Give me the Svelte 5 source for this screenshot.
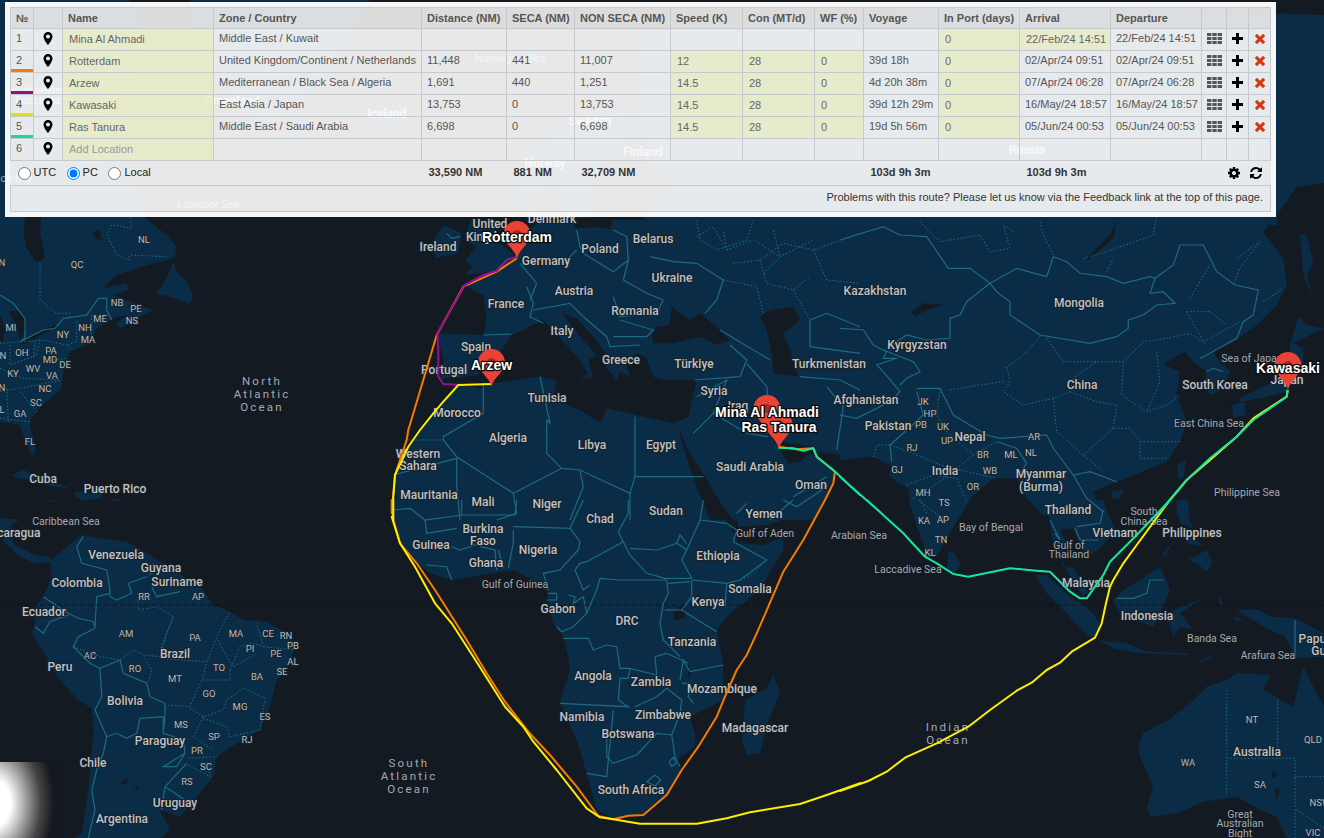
<script>
  // map shapes are traced per tile; each tile is drawn at 1/3 scale from its own origin
  const tiles = [
    { // eastern north america, caribbean
      at: [0, 215],
      land: [
        '0,0 430,5 500,60 528,95 525,130 440,150 350,180 310,220 380,205 385,225 340,240 420,270 458,285 430,300 360,342 350,325 380,300 340,310 290,340 270,385 210,410 190,470 185,520 140,560 95,600 90,630 108,710 95,725 70,660 60,630 0,620',
        '520,140 530,170 560,200 580,240 570,268 500,242 468,238 500,190',
        '35,780 70,765 130,790 210,820 160,815 100,795 50,790',
        '225,830 310,838 300,850 250,858 225,845',
        '145,855 180,858 160,860',
        '335,852 360,852 358,858 335,858'
      ],
      water: [
        '75,0 125,0 120,50 135,130 110,142 80,100 72,60',
        '25,290 60,285 80,310 75,350 60,375 45,320',
        '0,300 15,340 8,380 0,375',
        '62,382 130,345 132,355 75,387',
        '132,343 165,330 172,338 135,352',
        '280,50 300,45 305,75 285,70'
      ],
      solid: ['0,240 40,265 75,310 75,370 60,380 130,345 165,340 190,310 260,300 295,250 320,250 320,285 335,315'],
      dash: [
        '120,145 120,255 170,295 210,295',
        '335,30 320,60 350,120 385,135 390,120 500,125',
        '340,30 395,40 390,0',
        '230,320 230,380 200,390',
        '275,300 275,370',
        '0,385 130,375 200,390 215,405',
        '30,390 30,450 110,420 120,375',
        '130,440 200,430',
        '0,460 70,490 180,495',
        '0,530 60,520 185,495',
        '60,530 110,590 90,610',
        '0,610 90,620',
        '20,520 25,620',
        '105,380 100,430'
      ]
    },
    { // south america
      at: [0, 500],
      land: [
        '150,185 165,170 230,115 250,105 300,115 380,125 450,165 530,215 610,270 640,315 690,335 730,360 800,365 860,400 885,440 870,490 830,540 810,620 780,690 710,730 650,770 640,830 590,890 540,950 480,930 510,990 480,1014 225,1014 245,1000 265,870 280,700 275,625 235,600 170,530 140,470 95,400 105,370 100,330 130,290 155,230',
        '0,55 60,58 35,75 30,110 45,135 105,165 150,170 160,185 105,190 60,170 20,135 0,105'
      ],
      water: ['360,850 385,835 380,855', '400,860 415,855 418,870'],
      solid: [
        '250,110 230,140 245,190 320,210 330,270 330,290 350,300 395,280 385,250 440,230',
        '450,225 460,190',
        '455,260 470,290 540,275',
        '330,280 290,290 285,380',
        '130,290 205,340 235,355 280,365 285,385',
        '105,380 130,400 150,365 205,345',
        '285,385 235,410 220,440 270,490 300,505 360,480',
        '360,480 370,520 440,550 450,590 495,610 495,650 490,695',
        '300,505 305,590 285,630 320,710 350,700 380,715 410,700 420,655 490,650 490,700 550,720 555,760 490,800 530,800 555,760',
        '320,710 310,760 290,810 275,870 285,930 265,1014',
        '495,860 570,910',
        '495,860 485,930',
        '495,860 560,790'
      ],
      dash: [
        '415,280 415,330 470,320 520,350 480,450',
        '520,350 500,400 480,470 430,465',
        '220,440 300,470 360,480 400,450 430,465 455,510 445,545',
        '480,475 620,485 610,530 570,620 510,615 495,625',
        '620,485 655,400 690,335',
        '610,540 690,540 690,510',
        '690,510 720,440 760,430 790,440 770,370',
        '655,420 680,470 700,500 770,460',
        '790,440 885,450',
        '570,625 610,650 670,630 680,600 730,565 795,595 780,690',
        '610,650 580,710 640,750',
        '610,655 680,680 690,710 780,690',
        '565,775 650,770',
        '565,795 630,830 620,780'
      ]
    },
    { // europe, north africa, middle east
      at: [380, 220],
      land: [
        '55,900 45,765 85,690 130,620 190,545 235,495 225,470 180,480 190,420 170,340 310,345 320,300 310,225 250,195 300,175 350,155 410,110 440,60 445,35 470,10 470,0 570,0 590,25 650,22 690,28 700,0 1440,0 1440,710 1310,695 1310,710 1370,760 1350,800 1300,900',
        '270,0 340,0 350,60 400,105 380,150 255,165 275,140 255,120 290,80 255,60',
        '190,15 245,40 235,100 165,115 160,60',
        '495,330 515,335 510,375 495,370',
        '490,385 515,385 515,435 490,435',
        '545,445 610,450 600,485 560,470',
        '705,505 770,505 770,515 705,515',
        '895,510 930,505 905,525'
      ],
      water: [
        '245,495 225,475 290,465 340,430 395,345 440,325 490,300 545,360 600,420 625,460 600,480 640,470 625,420 650,405 600,350 546,280 590,295 640,350 675,395 670,430 710,480 720,455 750,470 735,420 770,400 800,415 820,470 860,480 950,480 925,590 880,610 770,585 680,565 660,610 600,570 520,540 530,480 480,470 340,490 300,505',
        '815,345 830,320 870,315 875,260 900,280 930,300 960,280 1020,330 1050,360 1010,375 960,350 880,370 820,370',
        '1140,290 1170,270 1240,260 1260,300 1210,340 1230,390 1255,470 1180,460 1175,400 1160,330',
        '895,625 925,690 975,770 1030,860 1060,900 990,900 950,800 915,700',
        '1165,620 1205,665 1300,680 1310,710 1290,700 1260,725 1225,730 1205,700 1195,680 1165,640'
      ],
      solid: [
        '310,345 395,342',
        '440,200 460,250 450,290 490,310',
        '420,130 470,190 450,240',
        '550,130 590,90',
        '460,270 570,250 610,290',
        '590,30 600,80 610,100 700,155 745,120 740,50 700,30',
        '745,120 730,180 800,220 850,240',
        '810,110 880,125 950,130 1030,180 1010,240 975,280',
        '700,230 720,290 830,280 850,240',
        '720,300 820,330 800,350 700,350',
        '610,290 680,350 690,380 780,375',
        '945,480 1080,470 1100,420 1050,375',
        '950,530 1040,480 1000,580 1100,640 1165,650',
        '1100,430 1160,500 1170,590 1205,640',
        '940,640 1000,580',
        '765,590 765,770 970,770',
        '500,600 500,700 545,745 600,750 750,820 765,770',
        '190,660 230,710 400,820 545,745',
        '480,470 510,610 500,600',
        '190,660 190,650 310,580 310,490',
        '40,765 230,715 230,800 240,900',
        '400,820 410,880 350,900',
        '750,820 750,900',
        '600,750 610,800 570,900',
        '1240,830 1340,770',
        '1210,840 1250,860 1340,800',
        '1290,300 1340,280 1440,320',
        '1380,480 1440,510',
        '1340,500 1390,560 1370,690',
        '1260,470 1380,480',
        '1290,300 1290,380 1440,400',
        '1020,330 1170,420',
        '200,40 215,55 240,50'
      ],
      dash: [
        '75,660 190,660',
        '950,50 1000,20 1040,90 1030,30',
        '1040,90 1120,60 1200,110 1300,60',
        '1150,160 1200,110 1180,30',
        '1030,180 1130,200 1150,280',
        '950,0 960,60 1010,90 1100,60 1120,0',
        '1060,130 1140,120 1210,70 1300,90 1440,40',
        '1140,120 1160,190 1240,210 1290,170',
        '1240,210 1290,300',
        '1300,90 1340,180 1440,190'
      ]
    },
    { // africa south of the sahara
      at: [380, 500],
      land: [
        '40,0 40,60 60,130 110,190 150,220 215,240 310,225 400,210 440,230 500,270 505,310 520,370 550,410 565,470 570,510 550,570 540,610 590,720 620,820 650,930 700,955 790,940 860,880 900,810 890,780 945,740 945,700 930,650 1030,600 1030,495 1010,390 1050,340 1140,270 1210,150 1210,110 1150,135 1075,130 1060,95 1000,0',
        '1060,0 1075,80 1160,75 1235,50 1305,0',
        '1180,525 1200,575 1160,680 1140,760 1100,765 1085,720 1095,600 1160,565'
      ],
      water: ['880,335 915,310 915,355 880,360', '925,490 932,520 925,540'],
      solid: [
        '40,30 90,25 135,60 245,45 245,0',
        '135,60 140,100 230,85',
        '245,45 405,45 410,0',
        '400,80 570,85 600,125 595,150 540,210 490,220 505,270',
        '385,205 400,130 400,90',
        '570,85 610,0',
        '355,150 370,205',
        '300,140 345,150 350,210',
        '215,240 200,200 140,195',
        '215,140 240,150 300,130',
        '745,0 745,40 715,95 730,125 620,185 600,190 585,210 610,270 630,255',
        '730,125 750,165 800,220 855,235 935,235 905,180 920,150 890,130',
        '750,145 830,150 890,130 900,105 920,130',
        '970,0 960,60 920,150',
        '960,60 1040,70 1070,90 1060,125 1160,180 1080,240 1040,250 1035,320',
        '935,240 1040,250',
        '935,240 935,290 905,330 1010,395',
        '650,270 660,235 720,240 860,240 865,280 850,310 840,370 850,420 900,470',
        '620,340 650,270',
        '865,250 930,245',
        '855,330 910,330',
        '505,280 530,280 530,300 500,300',
        '565,285 585,290 580,310 610,290 620,340 580,380 545,395 530,380',
        '550,415 625,415 640,450 680,435 710,440 720,505 750,505 830,525 825,470 860,460 905,480 925,490',
        '750,505 745,535 720,535 715,600 745,620 540,610',
        '700,630 680,830 620,820',
        '680,700 680,770 700,790 770,765 830,700 875,705 885,770 900,800',
        '765,620 830,590 860,565 905,600 900,640 875,705',
        '900,540 910,480 930,515 1030,495',
        '940,610 925,590 930,550 905,550',
        '800,845 825,825 842,840 825,858 800,845',
        '868,785 880,772 888,790 875,800 868,785',
        '1070,40 1100,10',
        '1170,60 1240,0'
      ],
      dash: ['1160,180 1120,220 1085,240']
    },
    { // central and east asia
      at: [840, 215],
      land: [
        '0,0 1310,0 1270,50 1330,130 1340,210 1310,270 1240,340 1180,380 1120,410 1140,440 1170,470 1150,520 1110,540 1090,510 1100,470 1060,440 1035,410 1000,430 970,450 1020,470 1010,540 1040,620 1020,680 980,740 830,800 760,830 790,890 800,900 610,900 560,850 530,790 460,790 380,860 350,900 220,900 205,820 175,805 145,780 160,755 100,725 0,735',
        '1200,550 1300,500 1350,450 1350,380 1390,400 1390,450 1340,530 1280,545 1200,560',
        '1175,570 1215,560 1215,600 1180,610',
        '1375,305 1350,390 1452,340 1400,330',
        '1380,60 1400,60 1420,140 1400,180 1420,250 1390,180',
        '1010,750 1040,730 1030,790 1015,790',
        '815,830 850,825 840,850 815,850',
        '1010,860 1040,850 1050,900 1010,900'
      ],
      water: ['810,60 830,20 820,70 745,135 740,130', '215,290 250,265 310,270 260,285 225,305'],
      solid: [
        '0,75 130,35 180,60 260,65 325,160 390,160 450,205',
        '450,205 530,160 620,185 640,125 680,140 720,175 800,185 850,205 930,185 945,190 930,235 970,230 1005,265 950,270 910,300 865,315 865,340 830,365 750,385 600,360 510,300 510,260 470,230 450,205',
        '945,190 1000,150 1020,90 1090,90 1130,170 1185,210 1255,225 1240,300 1210,320 1190,370 1100,420 1080,430',
        '450,205 380,260 360,300 330,310 330,370 260,375 200,360 140,400',
        '130,405 220,440 240,470 200,490 180,510',
        '0,340 70,345 100,390 140,410 130,430 170,430 110,450 130,470',
        '130,470 180,530 150,560',
        '0,600 50,610 150,560',
        '230,530 250,600 195,650 150,690 155,740',
        '230,520 300,520 340,600 440,660 480,670 620,660 640,700 700,780 750,770 830,800',
        '470,680 530,700 560,745 530,790',
        '700,780 740,850 790,890',
        '1100,470 1120,460 1150,470'
      ],
      dash: [
        '600,365 540,430 500,455 510,500 490,530 550,570 640,550 690,530 700,490 770,440 850,440 910,380 980,370 1050,355 1100,390',
        '620,370 670,440 770,440',
        '850,440 845,540 920,590 980,570 1020,540',
        '690,530 770,560 830,570 820,640 870,640 900,680 900,730 980,730',
        '640,550 650,650 730,720 790,770',
        '730,720 820,640',
        '950,410 960,500 920,590',
        '900,680 1020,680',
        '1040,290 1090,380 1200,320',
        '1040,290 1110,290 1160,330',
        '1050,250 1110,150',
        '240,20 300,80 420,60 450,110 510,100 490,30 520,50',
        '600,20 610,60 640,120',
        '730,130 800,110 940,60 950,0',
        '800,170 820,130',
        '1190,130 1260,80 1200,160 1180,210',
        '1270,260 1330,220',
        '150,690 110,690 100,730',
        '150,690 230,720 300,750 380,770 470,790',
        '200,810 280,780 350,790 380,860',
        '220,850 300,800 400,720 470,680',
        '300,520 290,600 320,650 400,720',
        '330,525 420,510 490,500'
      ]
    },
    { // south east asia, indian ocean, australia
      at: [840, 500],
      land: [
        '205,0 235,90 265,170 290,170 330,100 390,0',
        '325,155 345,160 362,195 340,225 322,210',
        '570,0 630,55 635,110 665,180 700,250 730,290 745,275 700,205 665,195 680,130 660,90 700,85 720,130 745,170 790,135 825,90 800,30 790,0',
        '585,225 620,225 690,290 740,320 780,370 765,410 745,410 680,340 620,280',
        '770,420 860,430 920,455 1040,460 1050,465 900,460 820,445',
        '1075,485 1130,460 1110,475 1080,490',
        '820,300 850,270 900,240 960,200 990,270 960,340 940,380 860,350 830,330',
        '1000,330 1090,295 1050,320 1020,340 1060,390 1020,380 1000,410 985,360',
        '1010,0 1045,0 1045,50 1060,85 1020,70',
        '1045,180 1100,150 1118,190 1100,215 1070,190',
        '1050,100 1090,140 1040,130',
        '965,165 1000,125 975,170',
        '1190,330 1260,330 1290,350 1365,355 1452,400 1452,470 1370,475 1335,410 1270,380 1240,360',
        '1135,285 1150,310 1140,320',
        '1180,350 1210,360 1190,365',
        '895,740 910,700 985,660 1050,610 1100,560 1160,540 1190,520 1290,525 1270,570 1360,620 1390,500 1420,560 1452,620 1452,1014 1340,1014 1310,950 1260,930 1190,890 1090,905 1010,940 930,950 920,920 940,860 900,770'
      ],
      water: ['1295,810 1310,820 1305,835 1295,830', '1305,865 1320,870 1310,900'],
      solid: [
        '1365,360 1365,475',
        '830,295 880,295 920,280 930,240 970,240',
        '630,60 660,120 645,100',
        '710,80 780,70 790,30',
        '705,85 720,120 775,120'
      ],
      dash: [
        '1160,570 1160,880',
        '1160,775 1365,775 1365,1014',
        '1313,600 1313,775',
        '1365,830 1452,830',
        '1370,930 1452,985',
        '235,0 300,50',
        '260,40 240,0'
      ]
    }
  ]

  function place(tile, pts) {
    const [ox, oy] = tile.at
    return pts.split(' ').map(p => {
      const [x, y] = p.split(',')
      return `${(ox + x / 3).toFixed(1)},${(oy + y / 3).toFixed(1)}`
    }).join(' ')
  }
  const byId = Object.fromEntries(tiles.map(t => [t.at.join(), t]))
  const route = parts => parts.map(([key, pts]) => place(byId[key], pts)).join(' ')

  const E = '380,220', A = '380,500', C = '840,215', S = '840,500'

  const routes = [
    { color: '#f57c00', pts: route([
      [E, '1195,680 1250,688 1300,685 1310,710 1365,755 1360,790'],
      [A, '1335,0 1270,120 1210,215 1165,320 1130,400 1100,465 1070,510 1035,590 1010,650 955,740 905,810 860,885 790,945 745,947 700,958 655,948 590,860 510,765 445,695 375,605 320,520 260,420 165,270 110,190 60,130 40,60 35,0'],
      [E, '35,880 45,765 80,660 85,630 130,480 170,345 250,200 350,155 410,115']
    ]) },
    { color: '#9a0f8e', pts: route([
      [E, '410,110 380,120 350,152 310,165 255,195 235,230 172,340 175,400 175,470 190,492 240,495']
    ]) },
    { color: '#ffee00', pts: route([
      [E, '335,492 235,495 190,545 160,580 120,630 85,680 45,765 40,830 40,900'],
      [A, '35,50 60,130 105,200 165,310 215,370 280,470 375,620 430,680 460,725 530,810 620,925 660,952 700,958 780,971 950,971 1040,955 1110,937 1260,912 1340,885 1440,850'],
      [S, '0,873 85,843 140,815 195,773 290,730 385,680 450,630 530,572 575,548 620,510 660,488 695,455 765,413 785,370 798,310 810,260 820,240 850,190 890,135 960,40 990,0'],
      [C, '1040,795 1110,735 1190,665 1240,610 1340,545 1343,525']
    ]) },
    { color: '#17e6a1', pts: route([
      [C, '1343,525 1340,545 1240,615 1190,665 1110,730 1040,795 950,900'],
      [S, '990,0 890,105 810,185 790,225 740,295 720,295 690,275 630,215 590,212 510,205 385,230 340,222 290,190 255,170 190,100 80,0'],
      [C, '130,900 0,785'],
      [E, '1440,825 1360,750 1310,710 1300,685 1270,692 1240,685 1195,683']
    ]) }
  ]

  const covered = [
    '0,0 130,0 150,60 100,120 130,170 145,218 0,218',
    '190,0 370,0 330,70 270,130 240,110 190,40',
    '365,108 410,105 400,122 375,125',
    '510,200 530,150 570,120 620,100 640,130 620,150 600,170 590,218 570,218 555,190 545,190 520,205',
    '640,130 640,30 800,20 1000,5 1324,15 1324,183 1297,187 1277,215 1277,225 640,225 660,190 680,180 650,170'
  ]

  const countries = [
    ['Ireland',438,247],['United',490,224],['Kingdom',490,237],['Germany',546,261],['Denmark',552,219],['Poland',600,249],['Belarus',653,239],['Ukraine',672,278],['Kazakhstan',875,291],['Mongolia',1079,303],['Kyrgyzstan',917,345],['Turkmenistan',829,364],['Afghanistan',866,400],['Pakistan',888,426],['Nepal',970,437],['India',945,471],['China',1082,385],['South Korea',1215,385],['Japan',1287,380],['France',506,304],['Austria',574,291],['Romania',635,311],['Italy',562,331],['Spain',476,347],['Portugal',444,370],['Greece',621,360],['Türkiye',694,364],['Syria',714,391],['Iraq',738,406],['Tunisia',547,398],['Morocco',457,413],['Algeria',508,438],['Libya',592,445],['Egypt',661,445],['Saudi Arabia',750,467],['Oman',811,485],['Western',418,454],['Sahara',418,466],['Mauritania',429,495],['Mali',483,502],['Niger',547,504],['Chad',600,519],['Sudan',666,511],['Yemen',764,514],['Ethiopia',718,556],['Somalia',750,589],['Kenya',708,602],['Tanzania',692,642],['DRC',627,621],['Gabon',558,609],['Angola',593,676],['Zambia',651,682],['Mozambique',722,689],['Madagascar',755,728],['Zimbabwe',663,715],['Botswana',628,734],['Namibia',582,717],['South Africa',631,790],['Guinea',431,545],['Burkina',483,529],['Faso',483,541],['Nigeria',538,550],['Ghana',486,563],['Myanmar',1041,474],['(Burma)',1041,487],['Thailand',1068,510],['Vietnam',1115,533],['Philippines',1192,533],['Malaysia',1086,583],['Indonesia',1147,616],['Papua New',1329,639],['Guinea',1330,651],['Australia',1257,752],['Cuba',43,479],['Puerto Rico',115,489],['Venezuela',116,555],['Guyana',161,568],['Suriname',177,582],['Colombia',77,583],['Ecuador',44,612],['Brazil',175,654],['Peru',60,667],['Bolivia',125,701],['Paraguay',160,741],['Chile',93,763],['Uruguay',175,803],['Argentina',122,819],['Nicaragua',13,533]
  ]
  const seas = [
    ['Caribbean Sea',66,521],['Gulf of Guinea',515,584],['Gulf of Aden',765,533],['Arabian Sea',859,535],['Bay of Bengal',991,527],['Laccadive Sea',908,569],['South',1144,511],['China Sea',1144,521],['East China Sea',1209,423],['Philippine Sea',1247,492],['Sea of Japan',1252,358],['Gulf of',1069,545],['Thailand',1069,554],['Banda Sea',1212,638],['Arafura Sea',1268,655],['Great',1240,814],['Australian',1240,823],['Bight',1240,833]
  ]
  const oceans = [
    ['North',262,381],['Atlantic',262,394],['Ocean',262,407],['South',409,763],['Atlantic',409,776],['Ocean',409,789],['Indian',948,727],['Ocean',948,740]
  ]
  const states = [
    ['NL',144,239],['QC',77,264],['N',2,262],['NB',117,302],['PE',136,308],['ME',100,318],['NS',132,320],['NH',85,327],['NY',63,334],['MA',88,339],['MI',11,327],['OH',22,352],['PA',51,350],['MD',50,359],['DE',65,364],['WV',33,368],['KY',13,373],['VA',52,375],['NC',45,388],['N',2,387],['SC',36,402],['GA',20,413],['L',2,409],['FL',30,441],['N',3,355],
    ['AM',126,633],['PA',195,637],['MA',236,633],['CE',268,633],['RN',286,635],['PB',293,645],['PI',250,648],['PE',276,653],['AL',293,661],['SE',282,671],['AC',90,655],['RO',135,668],['TO',219,667],['BA',257,676],['MT',175,678],['GO',209,693],['MG',240,706],['ES',265,716],['MS',181,724],['SP',214,736],['RJ',247,739],['PR',197,750],['SC',206,766],['RS',187,781],['RR',144,596],['AP',198,596],
    ['JK',923,401],['HP',930,413],['PB',921,424],['UK',943,426],['UP',947,440],['RJ',912,447],['AR',1034,436],['NL',1031,452],['ML',1011,454],['BR',983,454],['WB',990,470],['GJ',897,469],['OR',973,486],['MH',923,492],['TS',944,502],
    ['KA',924,520],['AP',943,519],['TN',941,539],['KL',930,552],['WA',1188,762],['NT',1252,719],['QLD',1313,739],['SA',1260,784],['NSW',1320,802],['VIC',1313,832]
  ]
  // labels that only show through the panel
  const faintLand = [
    ['Greenland',232,105],['Iceland',387,118],['Sweden',590,125],['Finland',643,156],['Norway',545,167],['Russia',1027,154]
  ]
  const faintSea = [
    ['Northwestern',38,94],['Passages',38,104],['Hudson Bay',4,182],['Labrador Sea',208,208],['Norwegian Sea',510,62]
  ]
  const pins = [
    { name: 'Mina Al Ahmadi', x: 767, top: 395, y: 416.5 },
    { name: 'Rotterdam', x: 517, top: 221, y: 242 },
    { name: 'Arzew', x: 491.5, top: 349, y: 370 },
    { name: 'Kawasaki', x: 1288, top: 352, y: 373 },
    { name: 'Ras Tanura', x: 779, top: 411, y: 432 }
  ]

  const widths = [23, 29, 151, 208, 85, 68, 96, 72, 72, 49, 75, 81, 91, 91, 25, 22, 22]
  const headers = ['№', '', 'Name', 'Zone / Country', 'Distance (NM)', 'SECA (NM)', 'NON SECA (NM)', 'Speed (K)', 'Con (MT/d)', 'WF (%)', 'Voyage', 'In Port (days)', 'Arrival', 'Departure', '', '', '']
  const rows = [
    { name: 'Mina Al Ahmadi', zone: 'Middle East / Kuwait', dist: '', seca: '', non: '', speed: '', con: '', wf: '', voyage: '', port: '0', arr: '22/Feb/24 14:51', dep: '22/Feb/24 14:51', first: true },
    { name: 'Rotterdam', zone: 'United Kingdom/Continent / Netherlands', dist: '11,448', seca: '441', non: '11,007', speed: '12', con: '28', wf: '0', voyage: '39d 18h', port: '0', arr: '02/Apr/24 09:51', dep: '02/Apr/24 09:51', line: 'orange' },
    { name: 'Arzew', zone: 'Mediterranean / Black Sea / Algeria', dist: '1,691', seca: '440', non: '1,251', speed: '14.5', con: '28', wf: '0', voyage: '4d 20h 38m', port: '0', arr: '07/Apr/24 06:28', dep: '07/Apr/24 06:28', line: 'purple' },
    { name: 'Kawasaki', zone: 'East Asia / Japan', dist: '13,753', seca: '0', non: '13,753', speed: '14.5', con: '28', wf: '0', voyage: '39d 12h 29m', port: '0', arr: '16/May/24 18:57', dep: '16/May/24 18:57', line: 'yellow' },
    { name: 'Ras Tanura', zone: 'Middle East / Saudi Arabia', dist: '6,698', seca: '0', non: '6,698', speed: '14.5', con: '28', wf: '0', voyage: '19d 5h 56m', port: '0', arr: '05/Jun/24 00:53', dep: '05/Jun/24 00:53', line: 'green' }
  ]
  const pin = 'M6 0a5.5 5.5 0 0 0-5.5 5.5C.5 9.5 6 16 6 16s5.5-6.5 5.5-10.5A5.5 5.5 0 0 0 6 0zm0 8a2.5 2.5 0 1 1 0-5 2.5 2.5 0 0 1 0 5z'
</script>

{#snippet marker()}
  <svg class="ico" width="10" height="13" viewBox="0 0 12 16"><path fill-rule="evenodd" d={pin}/></svg>
{/snippet}

{#snippet actions()}
  <td class="act up">
    <svg class="ico" width="15" height="11" viewBox="0 0 15 11" fill="#555">
      {#each [0, 5.3, 10.6] as x}
        {#each [0, 4, 8] as y}<rect {x} {y} width="4.4" height="3"/>{/each}
      {/each}
    </svg>
  </td>
  <td class="act up">
    <svg class="ico" width="11" height="11" viewBox="0 0 11 11"><path d="M4 0h3v4h4v3H7v4H4V7H0V4h4z"/></svg>
  </td>
  <td class="act up">
    <svg class="ico" width="10" height="10" viewBox="0 0 11 11" stroke="#cf3a10" stroke-width="3.4"><path d="M1 1l9 9M10 1l-9 9"/></svg>
  </td>
{/snippet}

<div class="screen">
  <svg class="map" width="1324" height="838" viewBox="0 0 1324 838">
    {#each covered as pts}<polygon class="land" points={pts}/>{/each}
    {#each tiles as t}
      {#each t.land as pts}<polygon class="land" points={place(t, pts)}/>{/each}
    {/each}
    {#each tiles as t}
      {#each t.water as pts}<polygon class="water" points={place(t, pts)}/>{/each}
    {/each}
    {#each tiles as t}
      {#each t.solid as pts}<polyline class="border" points={place(t, pts)}/>{/each}
      {#each t.dash as pts}<polyline class="state" points={place(t, pts)}/>{/each}
    {/each}
    <line class="equator" x1="0" y1="605" x2="1324" y2="605"/>

    {#each faintLand as [label, x, y]}<text class="faint-land" {x} {y}>{label}</text>{/each}
    {#each faintSea as [label, x, y]}<text class="faint-sea" {x} {y}>{label}</text>{/each}
    {#each countries as [label, x, y]}<text class="country" {x} y={y + 4}>{label}</text>{/each}
    {#each seas as [label, x, y]}<text class="sea" {x} y={y + 4}>{label}</text>{/each}
    {#each oceans as [label, x, y]}<text class="ocean" {x} y={y + 4}>{label}</text>{/each}
    {#each states as [label, x, y]}<text class="st" {x} y={y + 3.5}>{label}</text>{/each}

    {#each routes as r}<polyline class="route" points={r.pts} stroke={r.color}/>{/each}

    {#each pins as p}
      <g transform="translate({p.x - 13.5} {p.top})">
        <path class="pin" d="M13.5 0C6 0 0 6 0 13.5c0 9 10.500 13.500 13.500 24C16.500 27 27 22.500 27 13.500 27 6 21 0 13.500 0z"/>
        <circle cx="13.5" cy="13.5" r="4.600" fill="#b3261e"/>
      </g>
    {/each}
    {#each pins as p}<text class="pin-label" x={p.x} y={p.y}>{p.name}</text>{/each}
  </svg>

  <div class="glitch"></div>

  <div class="panel">
    <table>
      <colgroup>
        {#each widths as w}<col style="width:{w}px"/>{/each}
      </colgroup>
      <thead>
        <tr>{#each headers as h}<th>{h}</th>{/each}</tr>
      </thead>
      <tbody>
        {#each rows as r, i}
          <tr>
            <td class="no {r.line || ''}">{i + 1}</td>
            <td class="act">{@render marker()}</td>
            <td class="edit">{r.name}</td>
            <td>{r.zone}</td>
            <td>{r.dist}</td>
            <td>{r.seca}</td>
            <td>{r.non}</td>
            {#if r.first}
              <td></td><td></td><td></td>
            {:else}
              <td class="edit">{r.speed}</td>
              <td class="edit">{r.con}</td>
              <td class="edit">{r.wf}</td>
            {/if}
            <td>{r.voyage}</td>
            <td class="edit">{r.port}</td>
            <td class={r.first ? 'edit' : ''}>{r.arr}</td>
            <td>{r.dep}</td>
            {@render actions()}
          </tr>
        {/each}
        <tr>
          <td class="no">6</td>
          <td class="act">{@render marker()}</td>
          <td class="edit hint">Add Location</td>
          {#each Array(14) as _}<td></td>{/each}
        </tr>
        <tr class="totals">
          <td colspan="4">
            <div class="zones">
              <label><input type="radio" name="tz"/>UTC</label>
              <label><input type="radio" name="tz" checked/>PC</label>
              <label><input type="radio" name="tz"/>Local</label>
            </div>
          </td>
          <td class="sum">33,590 NM</td>
          <td class="sum">881 NM</td>
          <td class="sum">32,709 NM</td>
          <td colspan="3"></td>
          <td class="sum">103d 9h 3m</td>
          <td></td>
          <td class="sum">103d 9h 3m</td>
          <td colspan="2"></td>
          <td class="act gear">
            <svg class="ico" width="14" height="14" viewBox="0 0 1792 1792"><path d="M1152 896q0-106-75-181t-181-75-181 75-75 181 75 181 181 75 181-75 75-181zm512-109v222q0 12-8 23t-20 13l-185 28q-19 54-39 91 35 50 107 138 10 12 10 25t-9 23q-27 37-99 108t-94 71q-12 0-26-9l-138-108q-44 23-91 38-16 136-29 186-7 28-36 28h-222q-14 0-24.5-8.5t-11.5-21.5l-28-184q-49-16-90-37l-141 107q-10 9-25 9-14 0-25-11-126-114-165-168-7-10-7-23 0-12 8-23 15-21 51-66.5t54-70.5q-27-50-41-99l-183-27q-13-2-21-12.5t-8-23.5v-222q0-12 8-23t19-13l186-28q14-46 39-92-40-57-107-138-10-12-10-24 0-10 9-23 26-36 98.5-107.5t94.500-71.500q13 0 26 10l138 107q44-23 91-38 16-136 29-186 7-28 36-28h222q14 0 24.500 8.500t11.500 21.500l28 184q49 16 90 37l142-107q9-9 24-9 13 0 25 10 129 119 165 170 7 8 7 22 0 12-8 23-15 21-51 66.500t-54 70.500q26 50 41 98l183 28q13 2 21 12.500t8 23.500z"/></svg>
          </td>
          <td class="act sync">
            <svg class="ico" width="14" height="14" viewBox="0 0 1792 1792"><path d="M1639 1056q0 5-1 7-64 268-268 434.500t-478 166.500q-146 0-282.500-55t-243.500-157l-129 129q-19 19-45 19t-45-19-19-45v-448q0-26 19-45t45-19h448q26 0 45 19t19 45-19 45l-137 137q71 66 161 102t187 36q134 0 250-65t186-179q11-17 53-117 8-23 30-23h192q13 0 22.500 9.500t9.500 22.500zm25-800v448q0 26-19 45t-45 19h-448q-26 0-45-19t-19-45 19-45l138-138q-148-137-349-137-134 0-250 65t-186 179q-11 17-53 117-8 23-30 23h-199q-13 0-22.500-9.500t-9.500-22.500v-7q65-268 270-434.500t480-166.500q146 0 284 55.500t245 156.500l130-129q19-19 45-19t45 19 19 45z"/></svg>
          </td>
        </tr>
        <tr class="note">
          <td colspan="17">Problems with this route? Please let us know via the Feedback link at the top of this page.</td>
        </tr>
      </tbody>
    </table>
  </div>
</div>

<style>
  :global(body) {
    margin: 0;
    background: #141a22;
    overflow: hidden;
  }

  .screen {
    position: relative;
    width: 1324px;
    height: 838px;
    overflow: hidden;
    background: #141a22;
    font-family: 'Liberation Sans', Arial, sans-serif;
  }

  .map {
    position: absolute;
    inset: 0;
    display: block;
  }

  .land { fill: #0a2c47; }
  .water { fill: #141a22; }

  .border {
    fill: none;
    stroke: #1e6b7e;
    stroke-width: 1.2;
  }

  .state {
    fill: none;
    stroke: #1b7384;
    stroke-width: 1;
    stroke-dasharray: 1.5 2;
  }

  .equator {
    stroke: #0b1118;
    stroke-width: 1;
    stroke-dasharray: 5 3;
    opacity: 0.7;
  }

  text {
    font-family: Roboto, 'Liberation Sans', sans-serif;
    text-anchor: middle;
    paint-order: stroke;
    stroke-linejoin: round;
  }

  .faint-land {
    font-size: 12px;
    font-weight: 500;
    fill: #fff;
    opacity: 0.75;
  }

  .faint-sea {
    font-size: 10.5px;
    fill: #fff;
    opacity: 0.55;
  }

  .country {
    font-size: 12px;
    font-weight: 500;
    fill: #bcc3c8;
    stroke: #1b2026;
    stroke-width: 2px;
  }

  .sea {
    font-size: 10.5px;
    fill: #a3abb1;
    stroke: #141a22;
    stroke-width: 1.5px;
  }

  .ocean {
    font-size: 11.5px;
    letter-spacing: 2.2px;
    fill: #a3abb1;
    stroke: #141a22;
    stroke-width: 1px;
  }

  .st {
    font-size: 9.5px;
    fill: #b4babf;
    stroke: #1b2730;
    stroke-width: 1.5px;
  }

  .route {
    fill: none;
    stroke-width: 2;
    stroke-linejoin: round;
  }

  .pin { fill: #ea4335; }

  .pin-label {
    font-family: 'Liberation Sans', Arial, sans-serif;
    font-size: 14px;
    font-weight: 700;
    fill: #fff;
    stroke: #0b0b0b;
    stroke-width: 2.6px;
  }

  .glitch {
    position: absolute;
    left: 0;
    top: 762px;
    width: 57px;
    height: 76px;
    background: radial-gradient(ellipse 60px 85px at -6px 54%, #fff 28%, #999 55%, #444 78%, #15191e 100%);
  }

  .panel {
    position: absolute;
    left: 5px;
    top: 2px;
    width: 1261px;
    border: 5px solid rgba(255, 255, 255, 0.6);
    background: rgba(255, 255, 255, 0.9);
    background-clip: border-box;
  }

  table {
    width: 1260px;
    table-layout: fixed;
    border-collapse: collapse;
    font-size: 11px;
    color: #555;
  }

  th, td {
    height: 22px;
    padding: 0 0 3px 5px;
    border: 1px solid #c6cacf;
    box-sizing: border-box;
    text-align: left;
    white-space: nowrap;
    overflow: hidden;
  }

  th {
    height: 21px;
    padding: 0 0 0 5px;
    font-weight: 700;
    color: #555;
    background: rgba(0, 0, 0, 0.05);
  }

  .edit {
    padding: 0 0 1px 6px;
    background: rgba(230, 235, 190, 0.7);
    color: #666;
  }

  .hint { color: #999; }

  .no {
    padding-left: 5px;
    padding-bottom: 4px;
  }

  .orange { box-shadow: inset 0 -3px 0 #f57c00; }
  .purple { box-shadow: inset 0 -3px 0 #8e1188; }
  .yellow { box-shadow: inset 0 -3px 0 #e8dc00; }
  .green { box-shadow: inset 0 -3px 0 #17d99a; }

  .act {
    padding: 0 0 2px;
    text-align: center;
  }

  .act.up { padding-bottom: 4px; }

  .ico {
    display: inline-block;
    vertical-align: middle;
  }

  .totals td {
    height: 25px;
    padding: 0 0 2px 5px;
    border-left: none;
    border-right: none;
    font-weight: 700;
    color: #333;
  }

  .totals .act {
    padding: 0;
    text-align: center;
  }

  .totals .gear { padding-right: 8px; }
  .totals .sync { padding-right: 10px; }
  .totals .sum { padding-left: 7px; }

  .zones {
    display: flex;
    gap: 10.5px;
    padding-left: 2px;
    font-weight: 400;
    color: #222;
  }

  .zones label {
    display: flex;
    align-items: center;
    gap: 3px;
  }

  .zones input {
    width: 13px;
    height: 13px;
    margin: 2px 0 0;
  }

  .note td {
    height: 26px;
    padding: 0 7px 3px 0;
    text-align: right;
    color: #333;
  }
</style>
